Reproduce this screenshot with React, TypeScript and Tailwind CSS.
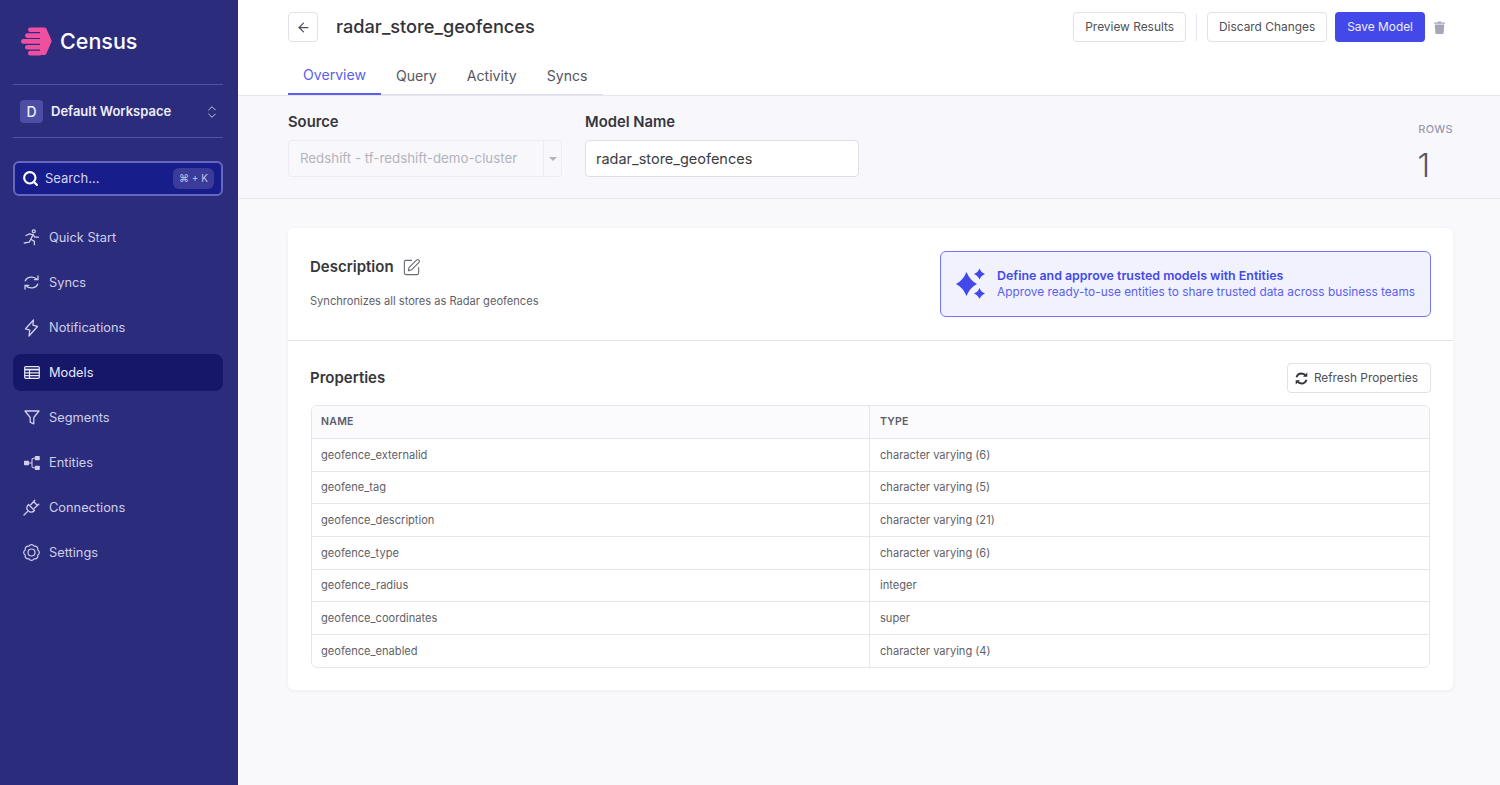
import { ArrowLeft, ChevronsUpDown, Search, SquarePen } from "lucide-react";

const rows = [
  ["geofence_externalid", "character varying (6)"],
  ["geofene_tag", "character varying (5)"],
  ["geofence_description", "character varying (21)"],
  ["geofence_type", "character varying (6)"],
  ["geofence_radius", "integer"],
  ["geofence_coordinates", "super"],
  ["geofence_enabled", "character varying (4)"],
];

function Logo() {
  return (
    <svg width="31" height="29" viewBox="0 0 31 29" fill="#ef4f9f">
      <path d="M19 0.500h4.500a2 2 0 0 1 1.800 1.100l5.200 11.700a2 2 0 0 1 0 1.500l-5.200 12a2 2 0 0 1-1.800 1.200H19z" />
      <rect x="7" y="0.500" width="14" height="4.600" rx="2.300" />
      <rect x="4" y="6.300" width="17" height="4.600" rx="2.300" />
      <rect x="0" y="12.100" width="21" height="4.600" rx="2.300" />
      <rect x="4" y="17.900" width="17" height="4.600" rx="2.300" />
      <rect x="7" y="23.700" width="14" height="4.800" rx="2.300" />
    </svg>
  );
}

function RunIcon() {
  return (
    <svg width="17" height="17" viewBox="0 0 17 17" fill="none" stroke="currentColor" strokeWidth="1.3" strokeLinecap="round" strokeLinejoin="round">
      <circle cx="10.800" cy="2.300" r="1.500" />
      <path d="M3 6.500 6.500 4.800l3.500.8-2.200 4.600 3.600 2.200v3.300" />
      <path d="M7.800 10.200 6.200 13.200 1.200 14" />
      <path d="m10 5.600 1.800 2.600h3.700" />
    </svg>
  );
}

function SyncIcon() {
  return (
    <svg width="17" height="17" viewBox="0 0 17 17" fill="none" stroke="currentColor" strokeWidth="1.3" strokeLinecap="round" strokeLinejoin="round">
      <path d="M2.300 6.800C3.800 2.800 10.500 1.500 14.300 5.500" />
      <path d="M15 2v3.600h-3.600" />
      <path d="M14.700 10.200C13.200 14.200 6.500 15.500 2.700 11.500" />
      <path d="M2 15v-3.600h3.600" />
    </svg>
  );
}

function BoltIcon() {
  return (
    <svg width="15" height="18" viewBox="0 0 15 18" fill="none" stroke="currentColor" strokeWidth="1.3" strokeLinejoin="round">
      <path d="M9.500 1 1.500 9.800l4.300 1.400L5 17l8.500-9.500-4.600-1.300z" />
    </svg>
  );
}

function TableIcon() {
  return (
    <svg width="16" height="13" viewBox="0 0 16 13" fill="none" stroke="currentColor" strokeWidth="1.200">
      <rect x="0.700" y="0.700" width="14.600" height="11.600" rx="1" />
      <path d="M0.700 3.600h14.600" strokeWidth="1.800" />
      <path d="M0.700 6.800h14.600M0.700 9.600h14.600M5.500 3.600v8.700" />
    </svg>
  );
}

function FunnelIcon() {
  return (
    <svg width="16" height="15" viewBox="0 0 16 15" fill="none" stroke="currentColor" strokeWidth="1.300" strokeLinejoin="round">
      <path d="M1 1h14L9.800 7.500v6.300l-3.600-1.600V7.500z" />
    </svg>
  );
}

function EntitiesIcon() {
  return (
    <svg width="16" height="14" viewBox="0 0 16 14" fill="currentColor">
      <rect x="0" y="4.700" width="5" height="4.600" rx="0.800" />
      <rect x="10.800" y="0" width="5" height="4.300" rx="0.800" />
      <rect x="10.800" y="9.700" width="5" height="4.300" rx="0.800" />
      <path d="M5 7h3M10.800 2.200H9.500a1.500 1.500 0 0 0-1.500 1.500v6.600a1.500 1.500 0 0 0 1.500 1.500h1.300" fill="none" stroke="currentColor" strokeWidth="1.100" />
    </svg>
  );
}

function PlugIcon() {
  return (
    <svg width="17" height="17" viewBox="0 0 17 17" fill="none" stroke="currentColor" strokeWidth="1.300" strokeLinecap="round" strokeLinejoin="round">
      <path d="M5.500 5.500 11.500 11.500C9.500 13.800 7 13.600 5.200 11.800 3.400 10 3.200 7.500 5.500 5.500z" />
      <path d="M1 16 4.300 12.700M7.800 5.800 11.800 1.200M11.200 9.200 15.800 5.200M10.500 2.500 14.500 6.500" />
    </svg>
  );
}

function GearIcon() {
  return (
    <svg width="17" height="17" viewBox="0 0 17 17" fill="none" stroke="currentColor" strokeWidth="1.200" strokeLinejoin="round">
      <path d="M14.740 5.920A2.900 2.900 0 0 1 14.740 11.080A2.900 2.900 0 0 1 11.080 14.740A2.900 2.900 0 0 1 5.920 14.740A2.900 2.900 0 0 1 2.260 11.080A2.900 2.900 0 0 1 2.260 5.920A2.900 2.900 0 0 1 5.920 2.260A2.900 2.900 0 0 1 11.080 2.260A2.900 2.900 0 0 1 14.740 5.920z" />
      <circle cx="8.500" cy="8.500" r="3.500" />
    </svg>
  );
}

function Sparkles() {
  return (
    <svg width="32" height="32" viewBox="0 0 32 32" fill="#4349e8">
      <path d="M11.500 4Q15 12.500 22 16 15 19.500 11.500 28 8 19.500 1 16 8 12.500 11.500 4z" />
      <path d="M24.500 0.500Q26 4.500 30 6 26 7.500 24.500 11.500 23 7.500 19 6 23 4.500 24.500 0.500z" />
      <path d="M24.500 20Q26 24 30 25.500 26 27 24.500 31 23 27 19 25.500 23 24 24.500 20z" />
    </svg>
  );
}

function RefreshIcon() {
  return (
    <svg width="13" height="13" viewBox="0 0 13 13" fill="none" stroke="#333339" strokeWidth="1.900">
      <path d="M1.500 5.300C2.300 2.800 4.200 1.500 6.500 1.500c1.700 0 3.200.8 4.200 2.200" />
      <path d="M11.500 7.700c-.8 2.500-2.700 3.800-5 3.800-1.700 0-3.200-.8-4.200-2.200" />
      <path d="M12.300 0.500v4.300H8z" fill="#333339" stroke="none" />
      <path d="M0.700 12.500V8.200H5z" fill="#333339" stroke="none" />
    </svg>
  );
}

function TrashIcon() {
  return (
    <svg width="11" height="13" viewBox="0 0 11 13" fill="#a5a5ba">
      <path d="M0 1.500h3.300L4 .500h3l.7 1H11v1.300H0z" />
      <path d="M.8 3.600h9.400l-.6 8.400a1 1 0 0 1-1 1H2.400a1 1 0 0 1-1-1z" />
    </svg>
  );
}

const nav = [
  { label: "Quick Start", icon: <RunIcon /> },
  { label: "Syncs", icon: <SyncIcon /> },
  { label: "Notifications", icon: <BoltIcon /> },
  { label: "Models", icon: <TableIcon />, active: true },
  { label: "Segments", icon: <FunnelIcon /> },
  { label: "Entities", icon: <EntitiesIcon /> },
  { label: "Connections", icon: <PlugIcon /> },
  { label: "Settings", icon: <GearIcon /> },
];

function Sidebar() {
  return (
    <aside className="flex w-[238px] shrink-0 flex-col bg-[#2c2c7d] pl-[13px] pr-[15px]">
      <div className="flex h-[84px] items-center gap-[8px] pb-[1px] pl-[8px]">
        <Logo />
        <span className="text-[21.500px] font-medium text-white">Census</span>
      </div>
      <div className="flex h-[54px] items-center border-y border-[#5353a3] pl-[7px] pr-[3px] pt-[1px]">
        <span className="flex size-[23px] items-center justify-center rounded bg-[#4d4da6] text-sm font-medium text-[#eeeef8]">D</span>
        <span className="ml-2 flex-1 text-[13px] font-semibold text-[#eeeef8]">Default Workspace</span>
        <ChevronsUpDown size={16} strokeWidth={1.5} className="text-[#c5c5e4]" />
      </div>
      <div className="mt-[23px] flex h-[35px] items-center rounded-md border-2 border-[#6767bd] bg-[#181d8c] pl-[7px] pr-[7px]">
        <Search size={17} strokeWidth={3} className="text-white" />
        <span className="ml-[6px] flex-1 text-[13px] text-[#d4d4ef]">Search...</span>
        <span className="flex h-[21px] w-[41px] items-center justify-center rounded-md bg-[#3b3b99] text-[10px] text-[#c5c5e4]">⌘ + K</span>
      </div>
      <nav className="mt-[23px] flex flex-col gap-[8px]">
        {nav.map((n) => (
          <div
            key={n.label}
            className={`flex h-[37px] items-center gap-[9px] rounded-lg pl-[10px] text-[12.800px] ${n.active ? "bg-[#17176a] text-[#e8e8f6]" : "text-[#cfcfea]"}`}
          >
            <span className="flex w-[17px] justify-center">{n.icon}</span>
            {n.label}
          </div>
        ))}
      </nav>
    </aside>
  );
}

function Button({ children }: { children: React.ReactNode }) {
  return (
    <button className="flex h-[30px] items-center rounded-sm border border-[#e1e1e8] bg-white px-[11px] text-[11.900px] text-[#4f4f58]">
      {children}
    </button>
  );
}

function Header() {
  return (
    <header className="h-[96px] border-b border-[#e6e6f0] bg-white pl-[50px] pr-[55px]">
      <div className="flex h-[54px] items-center">
        <span className="flex size-[30px] items-center justify-center rounded-sm border border-[#e1e1e8]">
          <ArrowLeft size={15} className="text-[#4f4f58]" />
        </span>
        <h1 className="ml-[18px] flex-1 text-[18.200px] font-medium text-[#333339]">radar_store_geofences</h1>
        <Button>Preview Results</Button>
        <span className="mx-[10px] h-[27px] w-px bg-[#e6e6f0]" />
        <Button>Discard Changes</Button>
        <button className="ml-[8px] flex h-[30px] items-center rounded-sm bg-[#4349e8] px-[12px] text-[11.900px] text-[#eeeefc]">Save Model</button>
        <span className="ml-[9px]">
          <TrashIcon />
        </span>
      </div>
      <div className="flex h-[41px] w-[315px] border-b border-[#dcdce8] text-[14.100px] text-[#56565f]">
        <span className="-mb-px flex w-[93px] items-center justify-center border-b-2 border-[#5a5fee] pt-[3px] text-[#5a5fee]">Overview</span>
        <span className="ml-[15px] flex items-center pt-[3px]">Query</span>
        <span className="ml-[30px] flex items-center pt-[3px]">Activity</span>
        <span className="ml-[30px] flex items-center pt-[3px]">Syncs</span>
      </div>
    </header>
  );
}

function SubHeader() {
  return (
    <section className="flex h-[103px] border-b border-[#e8e8f1] bg-[#f8f8fc] pl-[50px] pr-[47px] pt-[15px]">
      <div className="w-[274px]">
        <div className="text-[14.800px] font-semibold text-[#36363c]">Source</div>
        <div className="mt-[7px] flex h-[37px] items-center rounded-sm border border-[#ececf2] text-[13.300px] text-[#b3b3bb]">
          <span className="flex-1 pl-[11px]">Redshift - tf-redshift-demo-cluster</span>
          <span className="flex h-full w-[18px] items-center justify-center border-l border-[#ececf2]">
            <span className="border-x-[4px] border-t-[4px] border-x-transparent border-t-[#b3b3bb]" />
          </span>
        </div>
      </div>
      <div className="ml-[23px] w-[274px]">
        <div className="text-[14.800px] font-semibold text-[#36363c]">Model Name</div>
        <div className="mt-[7px] flex h-[37px] items-center rounded-sm border border-[#dedee6] bg-white pl-[10px] text-[14.500px] text-[#3c3c44]">radar_store_geofences</div>
      </div>
      <div className="ml-auto pt-[10px] text-right">
        <div className="text-[11px] font-medium tracking-wide text-[#9a9aae]">ROWS</div>
        <div className="mt-[10px] pr-[23px] text-[32px] leading-9 font-light text-[#55555f]">1</div>
      </div>
    </section>
  );
}

function Card() {
  return (
    <div className="ml-[50px] mr-[47px] mt-[29px] rounded-md bg-white shadow-[0_1px_4px_rgba(30,30,80,0.06)]">
      <div className="flex h-[113px] justify-between border-b border-[#e4e4e8] px-[22px] pt-[23px]">
        <div>
          <div className="flex items-center gap-[8px] pt-[5px]">
            <span className="text-[15px] font-semibold text-[#36363c]">Description</span>
            <SquarePen size={19} strokeWidth={1.4} className="text-[#6a6a76]" />
          </div>
          <p className="mt-[14px] text-[11.100px] text-[#5f5f68]">Synchronizes all stores as Radar geofences</p>
        </div>
        <div className="flex h-[66px] w-[491px] items-center gap-[10px] rounded-md border border-[#7176f2] bg-[#f2f2fe] pl-[14px]">
          <Sparkles />
          <div className="leading-[17px]">
            <div className="text-[12.400px] font-semibold text-[#4349e8]">Define and approve trusted models with Entities</div>
            <div className="text-[11.850px] text-[#5a5fee]">Approve ready-to-use entities to share trusted data across business teams</div>
          </div>
        </div>
      </div>
      <div className="px-[23px] pt-[22px] pb-[22px]">
        <div className="-mx-px flex h-[30px] items-center justify-between">
          <h2 className="pt-[1px] text-[15px] font-semibold text-[#36363c]">Properties</h2>
          <button className="flex h-[30px] items-center gap-[6px] rounded-sm border border-[#e1e1e8] pl-[7px] pr-3 pt-[1px] text-[11.850px] text-[#4f4f58]">
            <RefreshIcon />
            Refresh Properties
          </button>
        </div>
        <div className="mt-[12px] rounded-md border border-[#e6e6ef]">
          <div className="grid h-[32px] grid-cols-[558px_1fr] items-center rounded-t-md bg-[#fbfbfd] text-[10.500px] font-semibold tracking-wide text-[#5b5b6b]">
            <div className="flex h-full items-center border-r border-[#e6e6ef] pl-[9px]">NAME</div>
            <div className="pl-[10px]">TYPE</div>
          </div>
          {rows.map(([name, type]) => (
            <div key={name} className="grid h-[32.700px] grid-cols-[558px_1fr] items-center border-t border-[#e6e6ef] text-[11.100px] text-[#5f5f68]">
              <div className="flex h-full items-center border-r border-[#e6e6ef] pl-[9px]">{name}</div>
              <div className="pl-[10px]">{type}</div>
            </div>
          ))}
        </div>
      </div>
    </div>
  );
}

export default function App() {
  return (
    <div className="flex h-[785px] w-[1500px] overflow-hidden bg-[#f9f9fc] font-['Inter',sans-serif]">
      <Sidebar />
      <main className="flex-1">
        <Header />
        <SubHeader />
        <Card />
      </main>
    </div>
  );
}
